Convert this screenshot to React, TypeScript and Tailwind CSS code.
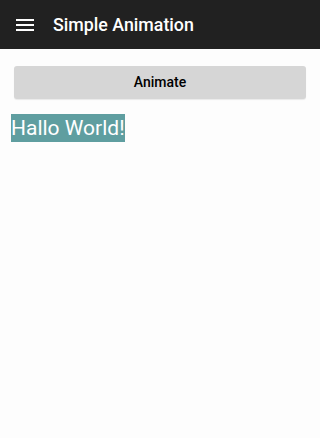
const App = () => {
  return (
    <div className="w-[320px] h-[438px] bg-[#fdfdfd] font-['Roboto',sans-serif] flex flex-col">
      <header className="h-[49px] bg-[#212121] flex items-center px-4 gap-[19px] shrink-0">
        <svg width="18" height="12" viewBox="0 0 18 12" className="shrink-0 mt-[1px]">
          <rect x="0" y="0" width="18" height="2" fill="#fff" />
          <rect x="0" y="5" width="18" height="2" fill="#fff" />
          <rect x="0" y="10" width="18" height="2" fill="#fff" />
        </svg>
        <h1 className="text-white text-[17.8px] font-medium mt-[1px]">
          Simple Animation
        </h1>
      </header>
      <div className="flex flex-col pt-[17px]">
        <button
          type="button"
          className="mx-[14px] h-[33px] bg-[#d6d6d6] rounded-[3px] text-[14px] font-medium text-black shadow-[0_1px_1px_rgba(0,0,0,0.08)]"
        >
          Animate
        </button>
        <div className="mt-[15px] ml-[11px] self-start">
          <span className="block bg-[#5f9ea0] text-white text-[21px] leading-[28px]">
            Hallo World!
          </span>
        </div>
      </div>
    </div>
  );
};

export default App;
